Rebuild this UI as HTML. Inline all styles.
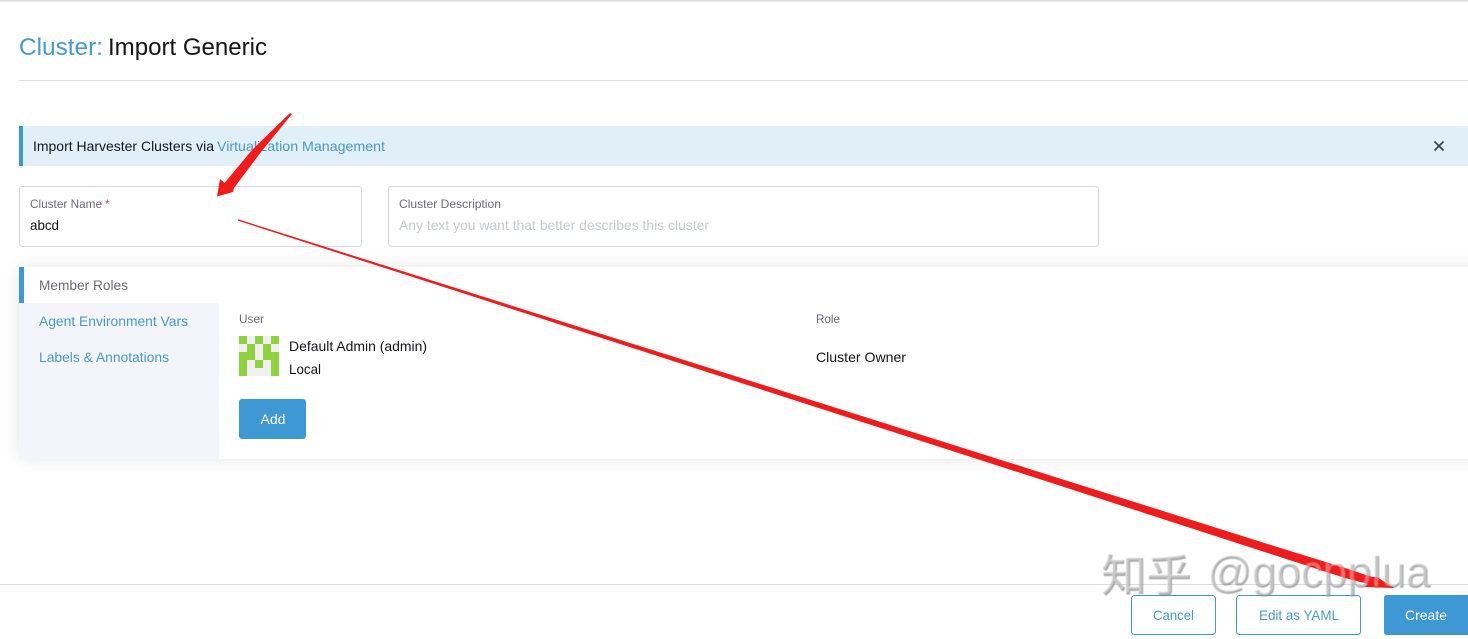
<!DOCTYPE html>
<html lang="en">
<head>
<meta charset="utf-8">
<title>Cluster: Import Generic</title>
<style>
html,body{margin:0;padding:0;width:1468px;height:639px;overflow:hidden;background:#fff}
svg{position:absolute;left:0;top:0;display:block}
text{font-family:"Liberation Sans","Noto Sans CJK SC",sans-serif}
</style>
</head>
<body>
<svg width="1468" height="639" viewBox="0 0 1468 639" xmlns="http://www.w3.org/2000/svg">
<defs>
<filter id="sh" x="-5%" y="-20%" width="110%" height="140%"><feGaussianBlur stdDeviation="8"/></filter>
<filter id="wm" x="-5%" y="-20%" width="110%" height="140%"><feGaussianBlur stdDeviation="0.5"/></filter>
</defs>
<rect width="1468" height="639" fill="#fff"/>
<rect x="0" y="0" width="1468" height="1.5" fill="#dcdcdc"/>
<rect x="19" y="80" width="1449" height="1" fill="#dcdee7"/>

<text x="19" y="55" font-size="24" fill="#4a9acc" textLength="84" lengthAdjust="spacingAndGlyphs">Cluster:</text>
<text x="108" y="55" font-size="24" fill="#141419" textLength="159" lengthAdjust="spacingAndGlyphs">Import Generic</text>

<rect x="19" y="126" width="1449" height="40" fill="#e0eff8"/>
<rect x="19" y="126" width="4" height="40" fill="#3d98d3"/>
<text x="33" y="151" font-size="14" fill="#141419" textLength="181" lengthAdjust="spacingAndGlyphs">Import Harvester Clusters via</text>
<text x="217" y="151" font-size="14" fill="#4a9acc" textLength="168" lengthAdjust="spacingAndGlyphs">Virtualization Management</text>
<path d="M1434.500 141.500l9 9M1443.500 141.500l-9 9" stroke="#3a3f4a" stroke-width="1.6" fill="none"/>

<rect x="19.500" y="186.500" width="342" height="60" rx="3" fill="#fff" stroke="#d6d8de"/>
<text x="30" y="208" font-size="12" fill="#6c6c76" textLength="72" lengthAdjust="spacingAndGlyphs">Cluster Name</text>
<text x="105" y="208" font-size="12" fill="#e0484f">*</text>
<text x="30" y="230" font-size="14" fill="#141419" textLength="29" lengthAdjust="spacingAndGlyphs">abcd</text>

<rect x="388.500" y="186.500" width="710" height="60" rx="3" fill="#fff" stroke="#d6d8de"/>
<text x="399" y="208" font-size="12" fill="#6c6c76" textLength="102" lengthAdjust="spacingAndGlyphs">Cluster Description</text>
<text x="399" y="230" font-size="14" fill="#c8cad3" textLength="310" lengthAdjust="spacingAndGlyphs">Any text you want that better describes this cluster</text>

<rect x="19" y="267" width="1470" height="192" fill="#000" opacity="0.1" filter="url(#sh)"/>
<rect x="19" y="267" width="1449" height="192" fill="#fff"/>
<rect x="19" y="303" width="200" height="156" fill="#f3f5fa"/>
<rect x="19" y="267" width="5" height="36" fill="#3d98d3"/>
<text x="39" y="290" font-size="14" fill="#6c6c76" textLength="89" lengthAdjust="spacingAndGlyphs">Member Roles</text>
<text x="39" y="326" font-size="14" fill="#4a9acc" textLength="149" lengthAdjust="spacingAndGlyphs">Agent Environment Vars</text>
<text x="39" y="362" font-size="14" fill="#4a9acc" textLength="130" lengthAdjust="spacingAndGlyphs">Labels &amp; Annotations</text>

<text x="239" y="323" font-size="12" fill="#6c6c76" textLength="25" lengthAdjust="spacingAndGlyphs">User</text>
<text x="816" y="323" font-size="12" fill="#6c6c76" textLength="24" lengthAdjust="spacingAndGlyphs">Role</text>

<rect x="239" y="336" width="40" height="40" fill="#f0f0f0"/>
<g fill="#8fd13f">
<rect x="239" y="336" width="8" height="8"/><rect x="255" y="336" width="8" height="8"/><rect x="271" y="336" width="8" height="8"/>
<rect x="247" y="344" width="8" height="8"/><rect x="263" y="344" width="8" height="8"/>
<rect x="239" y="352" width="16" height="8"/><rect x="263" y="352" width="16" height="8"/>
<rect x="239" y="360" width="8" height="8"/><rect x="255" y="360" width="8" height="8"/><rect x="271" y="360" width="8" height="8"/>
<rect x="239" y="368" width="8" height="8"/><rect x="271" y="368" width="8" height="8"/>
</g>
<text x="289" y="351" font-size="14" fill="#141419" textLength="138" lengthAdjust="spacingAndGlyphs">Default Admin (admin)</text>
<text x="289" y="374" font-size="14" fill="#141419" textLength="32" lengthAdjust="spacingAndGlyphs">Local</text>
<text x="816" y="362" font-size="14" fill="#141419" textLength="90" lengthAdjust="spacingAndGlyphs">Cluster Owner</text>

<rect x="239" y="399" width="67" height="40" rx="3" fill="#3d98d3"/>
<text x="260.500" y="424" font-size="14" fill="#fff" textLength="25" lengthAdjust="spacingAndGlyphs">Add</text>

<rect x="0" y="584" width="1468" height="1" fill="#d8dae2"/>

<rect x="1131.500" y="595.500" width="84" height="39" rx="3" fill="#fff" stroke="#3d98d3"/>
<text x="1153" y="620" font-size="14" fill="#4a9acc" textLength="41" lengthAdjust="spacingAndGlyphs">Cancel</text>
<rect x="1236.500" y="595.500" width="124" height="39" rx="3" fill="#fff" stroke="#3d98d3"/>
<text x="1259" y="620" font-size="14" fill="#4a9acc" textLength="80" lengthAdjust="spacingAndGlyphs">Edit as YAML</text>
<path d="M1387 595h81v40h-81a3 3 0 0 1-3-3v-34a3 3 0 0 1 3-3z" fill="#3d98d3"/>
<text x="1405" y="620" font-size="14" fill="#fff" textLength="42" lengthAdjust="spacingAndGlyphs">Create</text>

<path d="M292 114 L261 152 L234 188 L233 192 L217 196.500 L220 179 L224.500 183 L252 150 L290 113 Z" fill="#f01c1c"/>

<g filter="url(#wm)">
<text x="1102" y="591.500" font-size="44" fill="#888" opacity="0.75" stroke="#888" stroke-width="0.6" textLength="90" lengthAdjust="spacingAndGlyphs">知乎</text>
<text x="1208" y="587.500" font-size="44" fill="#888" opacity="0.75" textLength="223" lengthAdjust="spacingAndGlyphs">@gocpplua</text>
</g>

<path d="M238 219.300 L470 292.500 L800 396.500 L1030 469.100 L1270 544.700 L1345 568 L1372 577 L1377 577 L1394 588 L1365 587 L1368 584 L1345 578 L1270 553.700 L1030 476 L800 402 L470 295.500 L238 220.700 Z" fill="#ee1c1c"/>

<g filter="url(#wm)">
<text x="1101" y="590" font-size="44" fill="#fff" opacity="0.4" textLength="90" lengthAdjust="spacingAndGlyphs">知乎</text>
<text x="1207" y="586" font-size="44" fill="#fff" opacity="0.35" textLength="223" lengthAdjust="spacingAndGlyphs">@gocpplua</text>
</g>
</svg>
</body>
</html>
